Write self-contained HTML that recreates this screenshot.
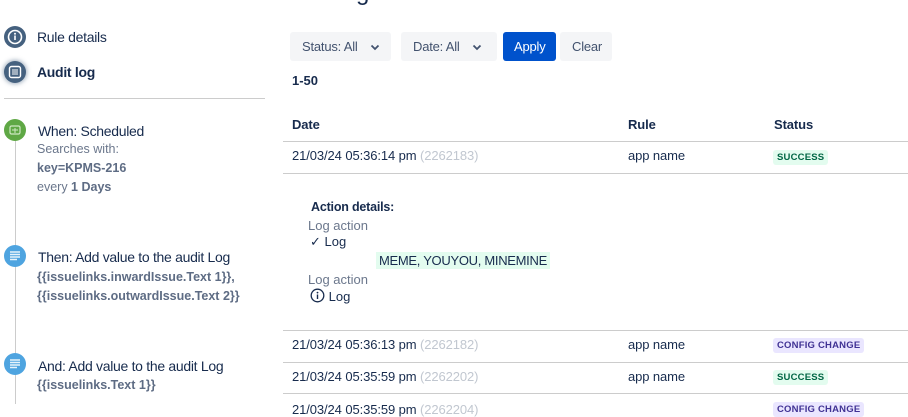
<!DOCTYPE html>
<html><head><meta charset="utf-8"><style>
*{margin:0;padding:0;box-sizing:border-box}
body{width:908px;height:404px;overflow:hidden;background:#fff;font-family:"Liberation Sans",Arial,sans-serif;color:#172b4d;position:relative}
.a{position:absolute;white-space:nowrap}
.c{position:absolute;width:22px;height:22px;border-radius:50%;left:4px}
.t14{font-size:14px;letter-spacing:-0.3px;color:#172b4d}
.s13{font-size:12.5px;color:#6b778c;line-height:19px}
.s13 b{color:#5e6c84}
.btn{position:absolute;top:32px;height:29px;border-radius:3px;background:#f4f5f7;font-size:13px;color:#42526e;line-height:29px;padding-left:12px;letter-spacing:-0.2px}
.hl{position:absolute;left:283px;right:0;height:1px;background:#ccc}
.cell{position:absolute;font-size:13px;letter-spacing:-0.1px;color:#172b4d}
.g{color:#c1c7d0}
.badge{position:absolute;font-size:9.5px;font-weight:bold;letter-spacing:.2px;padding:0 4px;border-radius:3px;line-height:15px}
</style></head><body>
<div class="a" style="left:356px;top:-21px;font-size:24px;color:#172b4d">g</div>

<div class="c" style="top:26px;background:#45617f"><svg width="22" height="22"><circle cx="11" cy="11" r="6.5" fill="none" stroke="#fff" stroke-width="1.6"/><rect x="10.2" y="9.5" width="1.6" height="4.5" fill="#fff"/><circle cx="11" cy="7.7" r="1" fill="#fff"/></svg></div>
<div class="a t14" style="left:37px;top:29px">Rule details</div>
<div class="c" style="top:61px;background:#45617f;box-shadow:0 0 4px 1px rgba(69,97,127,.5)"><svg width="22" height="22"><rect x="5.5" y="5.5" width="11" height="11" rx="2" fill="none" stroke="#fff" stroke-width="1.4"/><path d="M8 9h6M8 11h6M8 13h6" stroke="#fff" stroke-width="1"/></svg></div>
<div class="a t14" style="left:37px;top:64px;font-weight:bold">Audit log</div>
<div class="a" style="left:4px;top:98px;width:261px;height:1px;background:#ccc"></div>

<div class="a" style="left:15px;top:140px;width:1px;height:264px;background:#ccc"></div>
<div class="c" style="top:119px;background:#5fa845"><svg width="22" height="22"><rect x="6" y="7" width="10" height="8" rx="1.5" fill="none" stroke="#cfe8c4" stroke-width="1.2"/><path d="M8 11h6M11 9v5" stroke="#cfe8c4" stroke-width="1"/></svg></div>
<div class="a t14" style="left:38px;top:123px">When: Scheduled</div>
<div class="a s13" style="left:37px;top:140px">Searches with:<br><b>key=KPMS-216</b><br>every <b>1 Days</b></div>

<div class="c" style="top:245px;background:#4ea4e0"><svg width="22" height="22"><path d="M6 7h10M6 9.5h10M6 12h10M6 14.5h7" stroke="#e6f3fb" stroke-width="1.4"/></svg></div>
<div class="a t14" style="left:38px;top:249px">Then: Add value to the audit Log</div>
<div class="a s13" style="left:37px;top:268px"><b>{{issuelinks.inwardIssue.Text 1}},<br>{{issuelinks.outwardIssue.Text 2}}</b></div>

<div class="c" style="top:353px;background:#4ea4e0"><svg width="22" height="22"><path d="M6 7h10M6 9.5h10M6 12h10M6 14.5h7" stroke="#e6f3fb" stroke-width="1.4"/></svg></div>
<div class="a t14" style="left:38px;top:358px">And: Add value to the audit Log</div>
<div class="a s13" style="left:37px;top:376px"><b>{{issuelinks.Text 1}}</b></div>

<div class="btn" style="left:290px;width:101px">Status: All<svg style="position:absolute;left:80px;top:12px" width="10" height="7"><path d="M1.5 1.5l3.5 3.5 3.5-3.5" fill="none" stroke="#42526e" stroke-width="1.8"/></svg></div>
<div class="btn" style="left:401px;width:96px">Date: All<svg style="position:absolute;left:71px;top:12px" width="10" height="7"><path d="M1.5 1.5l3.5 3.5 3.5-3.5" fill="none" stroke="#42526e" stroke-width="1.8"/></svg></div>
<div class="btn" style="left:503px;width:53px;background:#0052cc;color:#fff;padding-left:11px">Apply</div>
<div class="btn" style="left:560px;width:52px;padding-left:12px">Clear</div>
<div class="a" style="left:292px;top:73px;font-size:13px;font-weight:bold">1-50</div>

<div class="cell" style="left:292px;top:117px;font-weight:bold">Date</div>
<div class="cell" style="left:628px;top:117px;font-weight:bold">Rule</div>
<div class="cell" style="left:774px;top:117px;font-weight:bold">Status</div>
<div class="hl" style="top:141px"></div>
<div class="cell" style="left:292px;top:148px">21/03/24 05:36:14 pm <span class="g">(2262183)</span></div>
<div class="cell" style="left:628px;top:148px">app name</div>
<div class="badge" style="left:773px;top:150px;background:#e3fcef;color:#006644">SUCCESS</div>
<div class="hl" style="top:173px"></div>

<div class="a" style="left:311px;top:200px;font-size:12.5px;font-weight:bold;letter-spacing:-0.2px">Action details:</div>
<div class="a" style="left:308px;top:218px;font-size:13px;color:#6b778c">Log action</div>
<div class="a" style="left:310px;top:234px;font-size:13px">✓ Log</div>
<div class="a" style="left:376px;top:252px;font-size:13px;letter-spacing:-0.3px;background:#e3fcef;padding:1px 3px;line-height:15px">MEME, YOUYOU, MINEMINE</div>
<div class="a" style="left:308px;top:272px;font-size:13px;color:#6b778c">Log action</div>
<div class="a" style="left:310px;top:288px;font-size:13px"><svg width="15" height="15" style="vertical-align:-2px"><circle cx="7.5" cy="7.5" r="6.3" fill="none" stroke="#172b4d" stroke-width="1.3"/><rect x="6.8" y="6.5" width="1.4" height="4.5" fill="#172b4d"/><circle cx="7.5" cy="4.6" r=".9" fill="#172b4d"/></svg> Log</div>

<div class="hl" style="top:330px"></div>
<div class="cell" style="left:292px;top:337px">21/03/24 05:36:13 pm <span class="g">(2262182)</span></div>
<div class="cell" style="left:628px;top:337px">app name</div>
<div class="badge" style="left:773px;top:338px;background:#eae6ff;color:#403294">CONFIG CHANGE</div>
<div class="hl" style="top:362px"></div>
<div class="cell" style="left:292px;top:369px">21/03/24 05:35:59 pm <span class="g">(2262202)</span></div>
<div class="cell" style="left:628px;top:369px">app name</div>
<div class="badge" style="left:773px;top:370px;background:#e3fcef;color:#006644">SUCCESS</div>
<div class="hl" style="top:393px"></div>
<div class="cell" style="left:292px;top:402px">21/03/24 05:35:59 pm <span class="g">(2262204)</span></div>
<div class="badge" style="left:773px;top:402px;background:#eae6ff;color:#403294">CONFIG CHANGE</div>
</body></html>
